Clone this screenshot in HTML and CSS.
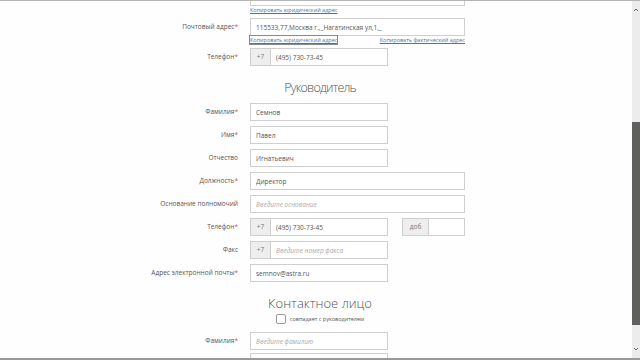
FILE: index.html
```html
<!DOCTYPE html>
<html lang="ru">

<head>
    <meta charset="UTF-8">
    <meta name="viewport" content="width=device-width, initial-scale=1.0">
    <title>Анкета организации</title>

    <link rel="stylesheet" href="styles.css">
</head>

<body>
    <div class="frame">
        <div class="page">
            <form class="form">
                <div class="field field-cut">
                    <label>Адрес фактический<span class="req">*</span></label>
                    <div class="control">
                        <input type="text" class="long" value="">
                        <div class="links">
                            <a href="#">Копировать юридический адрес</a>
                        </div>
                    </div>
                </div>

                <div class="field">
                    <label>Почтовый адрес<span class="req">*</span></label>
                    <div class="control">
                        <input type="text" class="long" value="115533,77,Москва г.,_Нагатинская ул,1,_">
                        <div class="links">
                            <a href="#" class="focused">Копировать юридический адрес</a>
                            <a href="#">Копировать фактический адрес</a>
                        </div>
                    </div>
                </div>

                <div class="field">
                    <label>Телефон<span class="req">*</span></label>
                    <div class="control">
                        <div class="group short">
                            <span class="addon">+7</span>
                            <input type="text" value="(495) 730-73-45">
                        </div>
                    </div>
                </div>

                <h2 class="h-boss">Руководитель</h2>

                <div class="field">
                    <label>Фамилия<span class="req">*</span></label>
                    <div class="control"><input type="text" class="short" value="Семнов"></div>
                </div>
                <div class="field">
                    <label>Имя<span class="req">*</span></label>
                    <div class="control"><input type="text" class="short" value="Павел"></div>
                </div>
                <div class="field">
                    <label>Отчество</label>
                    <div class="control"><input type="text" class="short" value="Игнатьевич"></div>
                </div>
                <div class="field">
                    <label>Должность<span class="req">*</span></label>
                    <div class="control"><input type="text" class="long" value="Директор"></div>
                </div>
                <div class="field">
                    <label>Основание полномочий</label>
                    <div class="control"><input type="text" class="long" placeholder="Введите основание"></div>
                </div>
                <div class="field">
                    <label>Телефон<span class="req">*</span></label>
                    <div class="control control-row">
                        <div class="group short">
                            <span class="addon">+7</span>
                            <input type="text" value="(495) 730-73-45">
                        </div>
                        <div class="group ext">
                            <span class="addon">доб</span>
                            <input type="text" value="">
                        </div>
                    </div>
                </div>
                <div class="field">
                    <label>Факс</label>
                    <div class="control">
                        <div class="group short">
                            <span class="addon">+7</span>
                            <input type="text" placeholder="Введите номер факса">
                        </div>
                    </div>
                </div>
                <div class="field">
                    <label>Адрес электронной почты<span class="req">*</span></label>
                    <div class="control"><input type="text" class="short" value="semnov@astra.ru"></div>
                </div>

                <h2 class="h-contact">Контактное лицо</h2>
                <div class="same">
                    <span class="box"></span>
                    <span>совпадает с руководителем</span>
                </div>

                <div class="field">
                    <label>Фамилия<span class="req">*</span></label>
                    <div class="control"><input type="text" class="short" placeholder="Введите фамилию"></div>
                </div>
                <div class="field field-next">
                    <label></label>
                    <div class="control"><input type="text" class="short"></div>
                </div>
            </form>
        </div>

        <div class="scrollbar">
            <svg class="arrow" width="8" height="8" viewBox="0 0 8 8">
                <path d="M2 5 L4 3 L6 5" fill="none" stroke="#666" stroke-width="1"/>
            </svg>
            <div class="track">
                <div class="thumb"></div>
            </div>
            <svg class="arrow" width="8" height="8" viewBox="0 0 8 8">
                <path d="M2 3 L4 5 L6 3" fill="none" stroke="#666" stroke-width="1"/>
            </svg>
        </div>
    </div>
</body>

</html>
```

FILE: styles.css
```css
body {
    margin: 0;
    padding: 0;
    background-color: #fff;
    font-family: "Open Sans", Arial, sans-serif;
    color: #555;
}

.frame {
    display: flex;
    height: 360px;
    box-sizing: border-box;
    border-top: 1px solid #b5b5b5;
    border-bottom: 2px solid #9a9a9a;
    overflow: hidden;
}

.page {
    flex: 1;
    overflow: hidden;
    background-color: #fefefe;
}

.form {
    margin-top: -13px;
}

.field {
    display: grid;
    grid-template-columns: 238px 1fr;
    column-gap: 12px;
    align-items: start;
    margin-bottom: 5px;
}

.field label {
    height: 18px;
    line-height: 18px;
    text-align: right;
    font-size: 6.5px;
    color: #555;
}

.field-cut label {
    color: #aaa;
}

.req {
    color: #d9534f;
}

.control-row {
    display: flex;
    gap: 14px;
}

input {
    display: block;
    height: 18px;
    box-sizing: border-box;
    margin: 0;
    padding: 0 5px;
    border: 1px solid #cfcfcf;
    border-radius: 0;
    font-family: "Open Sans", Arial, sans-serif;
    font-size: 6.5px;
    color: #555;
    background-color: #fff;
}

input::placeholder {
    color: #aaa;
    font-style: italic;
}

.long {
    width: 215px;
}

.short {
    width: 138px;
}

.group {
    display: flex;
    height: 18px;
}

.group input {
    flex: 1;
    width: auto;
    min-width: 0;
}

.addon {
    width: 20px;
    box-sizing: border-box;
    border: 1px solid #cfcfcf;
    border-right: none;
    background-color: #eee;
    text-align: center;
    line-height: 16px;
    font-size: 6.5px;
    color: #777;
}

.ext {
    width: 63px;
}

.ext .addon {
    width: 26px;
}

.links {
    display: flex;
    justify-content: space-between;
    width: 215px;
    height: 8px;
    line-height: 8px;
    margin-bottom: -1px;
}

.links a {
    font-size: 5.5px;
    color: #3a79b8;
    text-decoration: underline;
}

.links a.focused {
    outline: 1px solid #8a8a8a;
}

h2 {
    margin: 12px 0 5px 8px;
    height: 20px;
    line-height: 20px;
    text-align: center;
    font-size: 13px;
    font-weight: 300;
    color: #555;
}

.h-boss {
    font-size: 12.5px;
    letter-spacing: -0.8px;
}

.h-contact {
    margin-top: 11px;
    margin-bottom: 0;
}

.same {
    display: flex;
    justify-content: center;
    align-items: center;
    gap: 4px;
    height: 11px;
    margin: 0 0 8px 8px;
    font-size: 5.5px;
    color: #555;
}

.box {
    width: 10px;
    height: 10px;
    box-sizing: border-box;
    border: 1px solid #999;
    border-radius: 2px;
    background-color: #fff;
}

.field-next {
    margin-top: -2px;
}

.scrollbar {
    width: 8px;
    display: flex;
    flex-direction: column;
    background-color: #ececec;
}

.arrow {
    display: block;
    margin: 5px 0;
}

.track {
    flex: 1;
    padding-top: 103px;
}

.thumb {
    height: 203px;
    background-color: #5f605e;
}
```
